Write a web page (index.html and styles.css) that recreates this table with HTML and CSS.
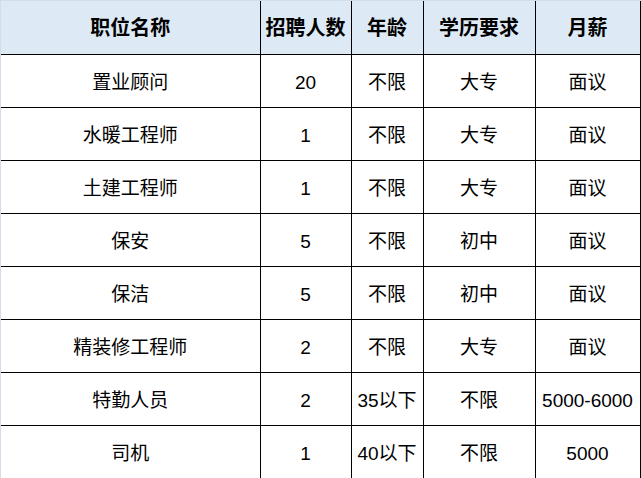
FILE: index.html
```html
<!DOCTYPE html>
<html lang="zh-CN">
<head>
<meta charset="utf-8">
<title>招聘职位</title>
<link rel="stylesheet" href="styles.css">
</head>
<body>
<div class="sheet">
<table class="jobs">
  <colgroup>
    <col class="c1"><col class="c2"><col class="c3"><col class="c4"><col class="c5">
  </colgroup>
  <thead>
    <tr><th>职位名称</th><th>招聘人数</th><th>年龄</th><th>学历要求</th><th>月薪</th></tr>
  </thead>
  <tbody>
    <tr><td>置业顾问</td><td>20</td><td>不限</td><td>大专</td><td>面议</td></tr>
    <tr><td>水暖工程师</td><td>1</td><td>不限</td><td>大专</td><td>面议</td></tr>
    <tr><td>土建工程师</td><td>1</td><td>不限</td><td>大专</td><td>面议</td></tr>
    <tr><td>保安</td><td>5</td><td>不限</td><td>初中</td><td>面议</td></tr>
    <tr><td>保洁</td><td>5</td><td>不限</td><td>初中</td><td>面议</td></tr>
    <tr><td>精装修工程师</td><td>2</td><td>不限</td><td>大专</td><td>面议</td></tr>
    <tr><td>特勤人员</td><td>2</td><td>35以下</td><td>不限</td><td>5000-6000</td></tr>
    <tr><td>司机</td><td>1</td><td>40以下</td><td>不限</td><td>5000</td></tr>
  </tbody>
</table>
</div>
</body>
</html>
```
FILE: styles.css
```css
html, body {
  margin: 0;
  padding: 0;
  background: #ffffff;
}
.sheet {
  width: 641px;
  height: 478px;
  box-sizing: border-box;
  border-top: 1px solid #d3dcea;
  border-left: 1px solid #d3dcea;
  overflow: hidden;
}
.jobs {
  border-collapse: collapse;
  table-layout: fixed;
  width: 639px;
  font-family: "Liberation Sans", "Noto Sans CJK SC", sans-serif;
  font-size: 19px;
  color: #000;
}
.c1 { width: 259px; }
.c2 { width: 91px; }
.c3 { width: 72px; }
.c4 { width: 112px; }
.c5 { width: 105px; }
.jobs th,
.jobs td {
  height: 53px;
  box-sizing: border-box;
  padding: 4px 0 0 0;
  text-align: center;
  vertical-align: middle;
  border-right: 1px solid #000;
  border-bottom: 1px solid #000;
  white-space: nowrap;
  line-height: 20px;
}
.jobs thead th {
  height: 53px;
  background: #ddeaf5;
  font-weight: bold;
  font-size: 20px;
  padding-top: 2px;
}
```
